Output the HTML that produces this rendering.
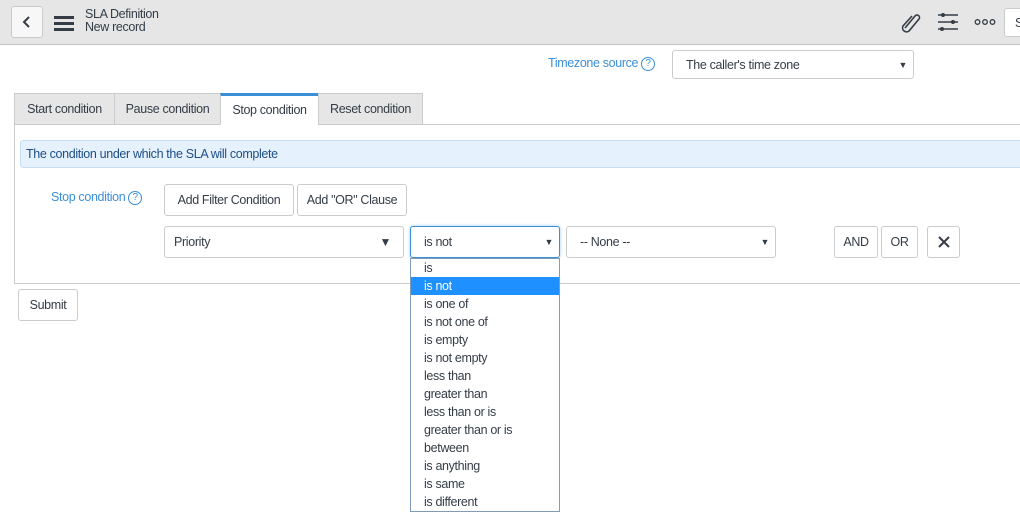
<!DOCTYPE html>
<html><head><meta charset="utf-8"><style>
*{box-sizing:border-box;margin:0;padding:0}
body{width:1020px;height:525px;background:#fff;font-family:"Liberation Sans",sans-serif;font-size:12.5px;color:#343d47;position:relative;overflow:hidden;letter-spacing:-0.35px}
.a{position:absolute}
.btn{position:absolute;border:1px solid #c9cbcd;border-radius:3px;background:#fff;display:flex;align-items:center;justify-content:center;color:#343d47}
.sel{position:absolute;border:1px solid #c9cbcd;border-radius:3px;background:#fff;display:flex;align-items:center;padding-left:9px}
.tab{position:absolute;top:93px;height:32px;border:1px solid #c9cbcd;background:#e6e6e6;display:flex;align-items:center;justify-content:center}
.q{display:inline-block;width:14px;height:14px;border:1.3px solid #3b8fd9;border-radius:50%;font-size:10px;line-height:11px;text-align:center;vertical-align:middle;margin-left:3px;letter-spacing:0}
.lbl{color:#3b8fd9}
.dd div{height:18px;line-height:18px;padding-left:13px}
</style></head><body>
<div class="a" style="left:0;top:0;width:1020px;height:45px;background:#e6e6e6;border-bottom:1px solid #c4c4c4"></div>
<div class="btn" style="left:11px;top:6px;width:32px;height:32px;background:#f7f7f7"><svg width="12" height="14"><path d="M8 2 L3 7 L8 12" stroke="#343d47" stroke-width="2" fill="none"/></svg></div>
<div class="a" style="left:54px;top:16px;width:20px;height:3px;background:#343d47;box-shadow:0 6px 0 #343d47,0 12px 0 #343d47"></div>
<div class="a" style="left:85px;top:8px;line-height:13px;font-size:12.5px">SLA Definition<br>New record</div>
<svg class="a" style="left:900px;top:11px" width="22" height="22"><path d="M5 17 L15 5 a2.5 2.5 0 0 1 4 3 L9 20 a4 4 0 0 1-6-5 L12 5" stroke="#343d47" stroke-width="1.6" fill="none"/></svg>
<svg class="a" style="left:937px;top:12px" width="22" height="20"><path d="M1 3H21M1 10H21M1 17H21" stroke="#343d47" stroke-width="1.5"/><circle cx="6" cy="3" r="2" fill="#343d47"/><circle cx="16" cy="10" r="2" fill="#343d47"/><circle cx="5" cy="17" r="2" fill="#343d47"/></svg>
<svg class="a" style="left:974px;top:18px" width="22" height="8"><circle cx="3.5" cy="4" r="2.3" stroke="#343d47" fill="none" stroke-width="1.3"/><circle cx="11" cy="4" r="2.3" stroke="#343d47" fill="none" stroke-width="1.3"/><circle cx="18.5" cy="4" r="2.3" stroke="#343d47" fill="none" stroke-width="1.3"/></svg>
<div class="btn" style="left:1004px;top:8px;width:30px;height:29px;justify-content:flex-start;padding-left:10px">S</div>

<div class="a lbl" style="left:548px;top:56px">Timezone source<span class="q">?</span></div>
<div class="sel" style="left:672px;top:50px;width:242px;height:29px;padding-left:13px">The caller's time zone<span class="a" style="right:6px;font-size:9px">▼</span></div>

<div class="a" style="left:14px;top:124px;width:1010px;height:160px;border:1px solid #c9cbcd"></div>
<div class="tab" style="left:14px;width:101px">Start condition</div>
<div class="tab" style="left:114px;width:107px">Pause condition</div>
<div class="tab" style="left:220px;width:99px;background:#fff;border-bottom-color:#fff;border-top:3px solid #3b8fd9;padding-top:0">Stop condition</div>
<div class="tab" style="left:318px;width:105px">Reset condition</div>

<div class="a" style="left:20px;top:140px;width:1010px;height:28px;background:#e5f1fc;border:1px solid #c6def3;border-radius:3px;color:#1d4f87;padding-left:5px;line-height:26px">The condition under which the SLA will complete</div>

<div class="a lbl" style="left:51px;top:190px">Stop condition<span class="q">?</span></div>
<div class="btn" style="left:164px;top:184px;width:130px;height:32px">Add Filter Condition</div>
<div class="btn" style="left:297px;top:184px;width:110px;height:32px">Add "OR" Clause</div>
<div class="sel" style="left:164px;top:226px;width:240px;height:32px">Priority<span class="a" style="right:12px;font-size:12px">▼</span></div>
<div class="sel" style="left:410px;top:226px;width:150px;height:32px;border-color:#3b8fd9;box-shadow:0 0 3px #9cc8f0;padding-left:13px">is not<span class="a" style="right:6px;font-size:9px">▼</span></div>
<div class="sel" style="left:566px;top:226px;width:210px;height:32px;padding-left:13px">-- None --<span class="a" style="right:6px;font-size:9px">▼</span></div>
<div class="btn" style="left:834px;top:226px;width:44px;height:32px">AND</div>
<div class="btn" style="left:881px;top:226px;width:37px;height:32px">OR</div>
<div class="btn" style="left:927px;top:226px;width:33px;height:32px"><svg width="14" height="14"><path d="M2 2L12 12M12 2L2 12" stroke="#343d47" stroke-width="2"/></svg></div>

<div class="a dd" style="left:410px;top:258px;width:150px;height:254px;border:1px solid #7f9db9;background:#fff">
<div>is</div><div style="background:#1e90ff;color:#fff">is not</div><div>is one of</div><div>is not one of</div><div>is empty</div><div>is not empty</div><div>less than</div><div>greater than</div><div>less than or is</div><div>greater than or is</div><div>between</div><div>is anything</div><div>is same</div><div>is different</div>
</div>

<div class="btn" style="left:18px;top:289px;width:60px;height:32px">Submit</div>
</body></html>
